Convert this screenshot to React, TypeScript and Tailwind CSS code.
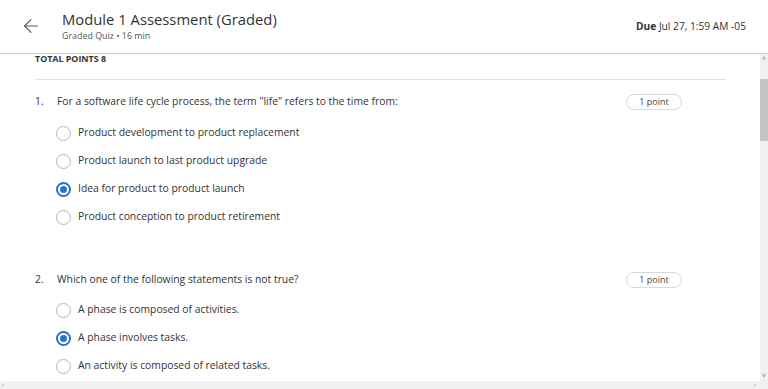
import { ArrowLeft } from "lucide-react"

interface Question {
  num: number
  text: string
  options: string[]
  selected: number
}

const questions: Question[] = [
  {
    num: 1,
    text: 'For a software life cycle process, the term "life" refers to the time from:',
    options: [
      "Product development to product replacement",
      "Product launch to last product upgrade",
      "Idea for product to product launch",
      "Product conception to product retirement",
    ],
    selected: 2,
  },
  {
    num: 2,
    text: "Which one of the following statements is not true?",
    options: [
      "A phase is composed of activities.",
      "A phase involves tasks.",
      "An activity is composed of related tasks.",
    ],
    selected: 1,
  },
]

function Radio({ checked }: { checked: boolean }) {
  if (checked) {
    return (
      <span className="w-[15px] h-[15px] rounded-full border-2 border-[#2a73cc] flex items-center justify-center shrink-0">
        <span className="w-[7px] h-[7px] rounded-full bg-[#2a73cc]" />
      </span>
    )
  }
  return <span className="w-[15px] h-[15px] rounded-full border border-[#b5b5b5] shrink-0" />
}

export default function App() {
  return (
    <div className="w-[768px] h-[389px] flex flex-col bg-white text-[#333] overflow-hidden font-['Open_Sans',sans-serif]">
      {/* Header */}
      <header className="h-[54px] shrink-0 flex items-center border-b border-[#cfcfcf] pl-[20px] pr-[22px]">
        <ArrowLeft size={22} strokeWidth={1.2} className="text-[#555] mr-[20px] -mt-[2px]" />
        <div className="flex-1 -mt-[2px]">
          <div className="text-[14.8px] leading-[20px] text-[#333]">Module 1 Assessment (Graded)</div>
          <div className="text-[8.9px] leading-[12px] text-[#555] mt-[1px]">Graded Quiz • 16 min</div>
        </div>
        <div className="text-[10.2px] text-[#333]">
          <span className="font-bold">Due</span> Jul 27, 1:59 AM -05
        </div>
      </header>

      <div className="flex flex-1 min-h-0">
        {/* Quiz body */}
        <main className="flex-1 pl-[35px] pr-[34px]">
          <div className="h-[10px] leading-[10px] text-[8.9px] font-bold uppercase text-[#333]">Total points 8</div>
          <div className="mt-[15px] border-t border-[#e3e3e3]" />

          {questions.map((q, qi) => (
            <section key={q.num} className={qi === 0 ? "mt-[12px]" : "mt-[39px]"}>
              <div className="h-[20px] flex items-center pr-[44px] text-[10.35px]">
                <span className="w-[22px]">{q.num}.</span>
                <span className="flex-1">{q.text}</span>
                <span className="w-[56px] h-[16px] rounded-full border border-[#d8d8d8] flex items-center justify-center text-[9px] text-[#444]">
                  1 point
                </span>
              </div>
              <div className={qi === 0 ? "mt-[7px]" : "mt-[6px]"}>
                {q.options.map((opt, i) => (
                  <div key={opt} className="h-[28px] flex items-center pl-[21px] gap-[7px] text-[10.35px]">
                    <Radio checked={i === q.selected} />
                    <span>{opt}</span>
                  </div>
                ))}
              </div>
            </section>
          ))}
        </main>

        {/* Vertical scrollbar */}
        <div className="w-[8px] bg-[#f1f1f1] flex flex-col items-center">
          <span className="text-[7px] leading-[8px] text-[#777] mt-[1px]">˄</span>
          <div className="w-[8px] h-[62px] bg-[#c4c4c4] mt-[16px]" />
          <div className="flex-1" />
          <span className="text-[7px] leading-[8px] text-[#777] mb-[1px]">˅</span>
        </div>
      </div>

      {/* Horizontal scrollbar */}
      <div className="h-[8px] shrink-0 bg-[#f1f1f1] flex items-center justify-between pl-[2px] pr-[12px] text-[7px] leading-[8px] text-[#999]">
        <span>‹</span>
        <span>›</span>
      </div>
    </div>
  )
}
